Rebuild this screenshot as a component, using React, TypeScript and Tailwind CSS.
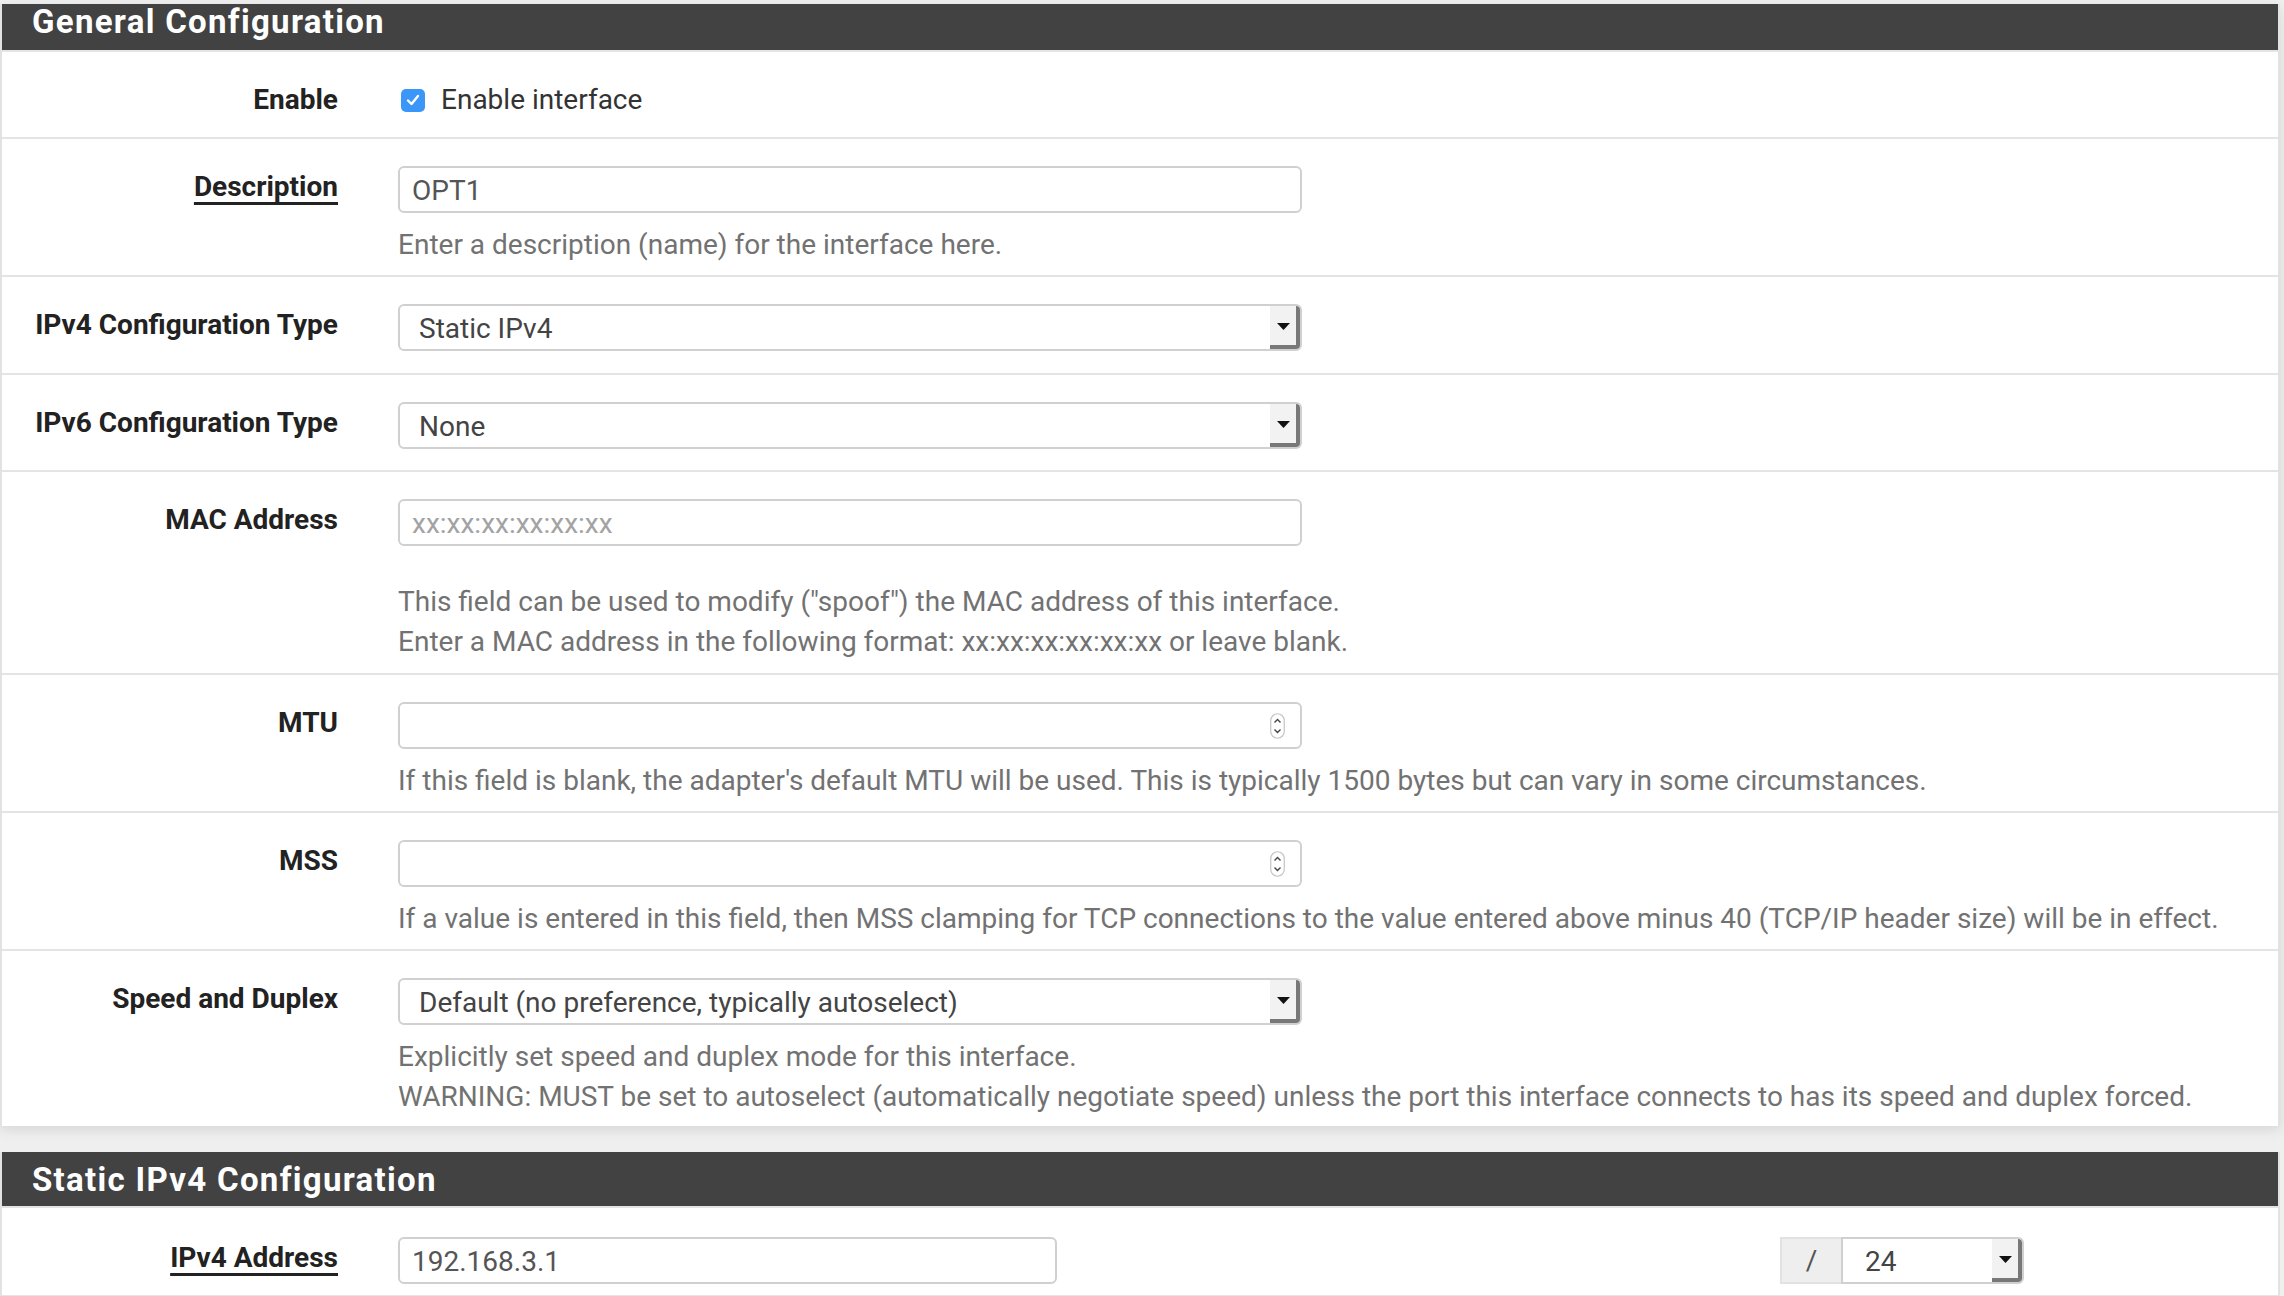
import type { ReactNode } from "react";

function Label({ text, required }: { text: string; required?: boolean }) {
  return (
    <div className="w-[336px] shrink-0 pt-[1px] text-right text-[28px] font-bold leading-[40px] text-[#222]">
      {required ? (
        <span className="underline decoration-[3px] underline-offset-[6px]">{text}</span>
      ) : (
        text
      )}
    </div>
  );
}

function Row({
  label,
  required,
  children,
  pt = "pt-[27px]",
  pb = "pb-[12px]",
}: {
  label: string;
  required?: boolean;
  children: ReactNode;
  pt?: string;
  pb?: string;
}) {
  return (
    <div className={`flex border-t-2 border-[#e4e4e4] ${pt} ${pb}`}>
      <Label text={label} required={required} />
      <div className="ml-[60px] flex-1 pr-[30px]">{children}</div>
    </div>
  );
}

function TextBox({ value, placeholder, width = "w-[904px]" }: { value?: string; placeholder?: string; width?: string }) {
  return (
    <div
      className={`${width} flex h-[47px] items-center rounded-[6px] border-2 border-[#d0d0d0] bg-white pl-[12px] pt-[2px] text-[28px] leading-[40px]`}
    >
      {value ? (
        <span className="text-[#555]">{value}</span>
      ) : (
        <span className="text-[#a3a3a3]">{placeholder}</span>
      )}
    </div>
  );
}

function NumberBox() {
  return (
    <div className="flex h-[47px] w-[904px] items-center justify-end rounded-[6px] border-2 border-[#d0d0d0] bg-white pr-[15px]">
      <svg width="15" height="26" viewBox="0 0 15 26" aria-hidden>
        <rect x="0.75" y="0.75" width="13.5" height="24.5" rx="6.75" fill="#fff" stroke="#c4c4c4" strokeWidth="1.2" />
        <path d="M4.5 9.5 7.5 6.5 10.5 9.5" fill="none" stroke="#444" strokeWidth="1.4" />
        <path d="M4.5 16.5 7.5 19.5 10.5 16.5" fill="none" stroke="#444" strokeWidth="1.4" />
      </svg>
    </div>
  );
}

function Arrow() {
  return (
    <div className="flex h-full w-[30px] shrink-0 items-center justify-center bg-[#f2f2f2] pr-[4px] pb-[2px] shadow-[inset_-4px_-4px_0_#787878]">
      <svg width="13" height="7" viewBox="0 0 13 7" aria-hidden>
        <path d="M0 0h13L6.5 7z" fill="#111" />
      </svg>
    </div>
  );
}

function SelectBox({ value }: { value: string }) {
  return (
    <div className="flex h-[47px] w-[904px] items-stretch overflow-hidden rounded-[6px] border-2 border-[#d0d0d0] bg-white">
      <div className="flex flex-1 items-center pl-[19px] pt-[2px] text-[28px] leading-[40px] text-[#444]">{value}</div>
      <Arrow />
    </div>
  );
}

function Help({ lines, mt = "mt-[12px]" }: { lines: string[]; mt?: string }) {
  return (
    <div className={`${mt} text-[28px] leading-[40px] text-[#727272]`}>
      {lines.map((l) => (
        <div key={l}>{l}</div>
      ))}
    </div>
  );
}

function PanelHeading({ title, tall }: { title: string; tall?: boolean }) {
  return (
    <div
      className={`bg-[#424242] pl-[30px] text-[33px] font-bold leading-[36px] tracking-[1.3px] text-white ${
        tall ? "h-[54px] pt-[10px]" : "h-[46px]"
      }`}
    >
      {title}
    </div>
  );
}

export default function App() {
  return (
    <div className="h-[1296px] w-[2284px] overflow-hidden bg-[#efefef] pt-[4px] font-['Roboto','Liberation_Sans',sans-serif]">
      <div className="mr-[4px] border-x-2 border-[#e2e2e2] bg-white shadow-[0_4px_12px_rgba(0,0,0,0.10)]">
        <PanelHeading title="General Configuration" />

        <Row label="Enable" pb="pb-[17px]">
          <div className="flex h-[40px] items-center pt-[2px] text-[28px] text-[#333]">
            <div className="ml-[3px] flex h-[23px] w-[24px] items-center justify-center rounded-[5px] bg-[#3a96f8]">
              <svg width="14" height="12" viewBox="0 0 14 12" aria-hidden>
                <path d="M2 6.5 5.5 10 12 2" fill="none" stroke="#fff" strokeWidth="2.4" strokeLinecap="round" strokeLinejoin="round" />
              </svg>
            </div>
            <span className="ml-[16px]">Enable interface</span>
          </div>
        </Row>

        <Row label="Description" required pb="pb-[10px]">
          <TextBox value="OPT1" />
          <Help lines={["Enter a description (name) for the interface here."]} />
        </Row>

        <Row label="IPv4 Configuration Type" pb="pb-[22px]">
          <SelectBox value="Static IPv4" />
        </Row>

        <Row label="IPv6 Configuration Type" pb="pb-[21px]">
          <SelectBox value="None" />
        </Row>

        <Row label="MAC Address" pb="pb-[11px]">
          <TextBox placeholder="xx:xx:xx:xx:xx:xx" />
          <Help
            mt="mt-[36px]"
            lines={[
              'This field can be used to modify ("spoof") the MAC address of this interface.',
              "Enter a MAC address in the following format: xx:xx:xx:xx:xx:xx or leave blank.",
            ]}
          />
        </Row>

        <Row label="MTU" pb="pb-[10px]">
          <NumberBox />
          <Help
            lines={[
              "If this field is blank, the adapter's default MTU will be used. This is typically 1500 bytes but can vary in some circumstances.",
            ]}
          />
        </Row>

        <Row label="MSS" pb="pb-[10px]">
          <NumberBox />
          <Help
            lines={[
              "If a value is entered in this field, then MSS clamping for TCP connections to the value entered above minus 40 (TCP/IP header size) will be in effect.",
            ]}
          />
        </Row>

        <Row label="Speed and Duplex" pb="pb-[9px]">
          <SelectBox value="Default (no preference, typically autoselect)" />
          <Help
            lines={[
              "Explicitly set speed and duplex mode for this interface.",
              "WARNING: MUST be set to autoselect (automatically negotiate speed) unless the port this interface connects to has its speed and duplex forced.",
            ]}
          />
        </Row>
      </div>

      <div className="mr-[4px] mt-[26px] border-x-2 border-[#e2e2e2] bg-white">
        <PanelHeading title="Static IPv4 Configuration" tall />
        <Row label="IPv4 Address" required pt="pt-[29px]" pb="pb-[11px]">
          <div className="flex items-center">
            <TextBox value="192.168.3.1" width="w-[659px]" />
            <div className="ml-[723px] flex h-[47px] w-[61px] items-center justify-center border-y-2 border-l-2 border-[#e2e2e2] bg-[#eeeeee] text-[28px] text-[#555]">
              /
            </div>
            <div className="flex h-[47px] w-[183px] items-stretch overflow-hidden rounded-r-[6px] border-2 border-[#d0d0d0] bg-white">
              <div className="flex flex-1 items-center pl-[22px] pt-[2px] text-[28px] text-[#444]">24</div>
              <Arrow />
            </div>
          </div>
        </Row>
        <div className="border-t-2 border-[#e4e4e4]" />
      </div>
    </div>
  );
}
